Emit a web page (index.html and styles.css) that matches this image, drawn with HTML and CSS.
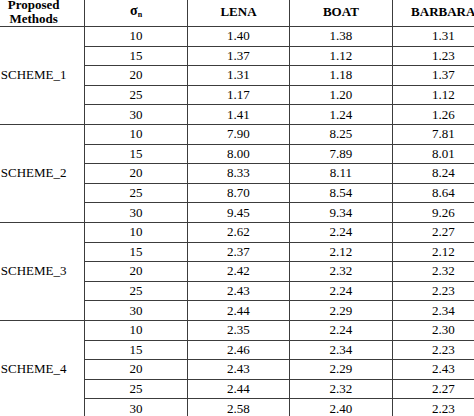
FILE: index.html
```html
<!DOCTYPE html>
<html>
<head>
<meta charset="utf-8">
<link rel="stylesheet" href="styles.css">
</head>
<body>
<table class="results">
  <colgroup>
    <col class="c"><col class="c"><col class="c"><col class="c"><col class="c">
  </colgroup>
  <thead>
    <tr class="head">
      <th>Proposed<br>Methods</th>
      <th><span class="sigma">σ</span><span class="sub">n</span></th>
      <th>LENA</th>
      <th>BOAT</th>
      <th>BARBARA</th>
    </tr>
  </thead>
  <tbody>
    <tr><td class="method" rowspan="5">SCHEME_1</td><td>10</td><td>1.40</td><td>1.38</td><td>1.31</td></tr>
    <tr><td>15</td><td>1.37</td><td>1.12</td><td>1.23</td></tr>
    <tr><td>20</td><td>1.31</td><td>1.18</td><td>1.37</td></tr>
    <tr><td>25</td><td>1.17</td><td>1.20</td><td>1.12</td></tr>
    <tr><td>30</td><td>1.41</td><td>1.24</td><td>1.26</td></tr>

    <tr><td class="method" rowspan="5">SCHEME_2</td><td>10</td><td>7.90</td><td>8.25</td><td>7.81</td></tr>
    <tr><td>15</td><td>8.00</td><td>7.89</td><td>8.01</td></tr>
    <tr><td>20</td><td>8.33</td><td>8.11</td><td>8.24</td></tr>
    <tr><td>25</td><td>8.70</td><td>8.54</td><td>8.64</td></tr>
    <tr><td>30</td><td>9.45</td><td>9.34</td><td>9.26</td></tr>

    <tr><td class="method" rowspan="5">SCHEME_3</td><td>10</td><td>2.62</td><td>2.24</td><td>2.27</td></tr>
    <tr><td>15</td><td>2.37</td><td>2.12</td><td>2.12</td></tr>
    <tr><td>20</td><td>2.42</td><td>2.32</td><td>2.32</td></tr>
    <tr><td>25</td><td>2.43</td><td>2.24</td><td>2.23</td></tr>
    <tr><td>30</td><td>2.44</td><td>2.29</td><td>2.34</td></tr>

    <tr><td class="method" rowspan="5">SCHEME_4</td><td>10</td><td>2.35</td><td>2.24</td><td>2.30</td></tr>
    <tr><td>15</td><td>2.46</td><td>2.34</td><td>2.23</td></tr>
    <tr><td>20</td><td>2.43</td><td>2.29</td><td>2.43</td></tr>
    <tr><td>25</td><td>2.44</td><td>2.32</td><td>2.27</td></tr>
    <tr><td>30</td><td>2.58</td><td>2.40</td><td>2.23</td></tr>
  </tbody>
</table>
</body>
</html>
```

FILE: styles.css
```css
html, body {
  margin: 0;
  padding: 0;
  background: #ffffff;
  overflow: hidden;
}

body {
  width: 474px;
  height: 416px;
  font-family: "Liberation Serif", "Times New Roman", serif;
  color: #000000;
}

.results {
  border-collapse: collapse;
  table-layout: fixed;
  width: 512px;
  margin-left: -18px;
  margin-top: -3px;
  font-size: 13px;
}

.results col.c {
  width: 102.4px;
}

.results th,
.results td {
  border: 1px solid #3c3c3c;
  text-align: center;
  vertical-align: middle;
  padding: 0;
  line-height: 12px;
}

.results th {
  font-weight: bold;
  height: 28px;
  line-height: 14px;
}

.results td {
  height: 18.6px;
}

.sigma {
  font-size: 14px;
}

.sub {
  font-size: 8px;
  position: relative;
  top: 2px;
}
```
